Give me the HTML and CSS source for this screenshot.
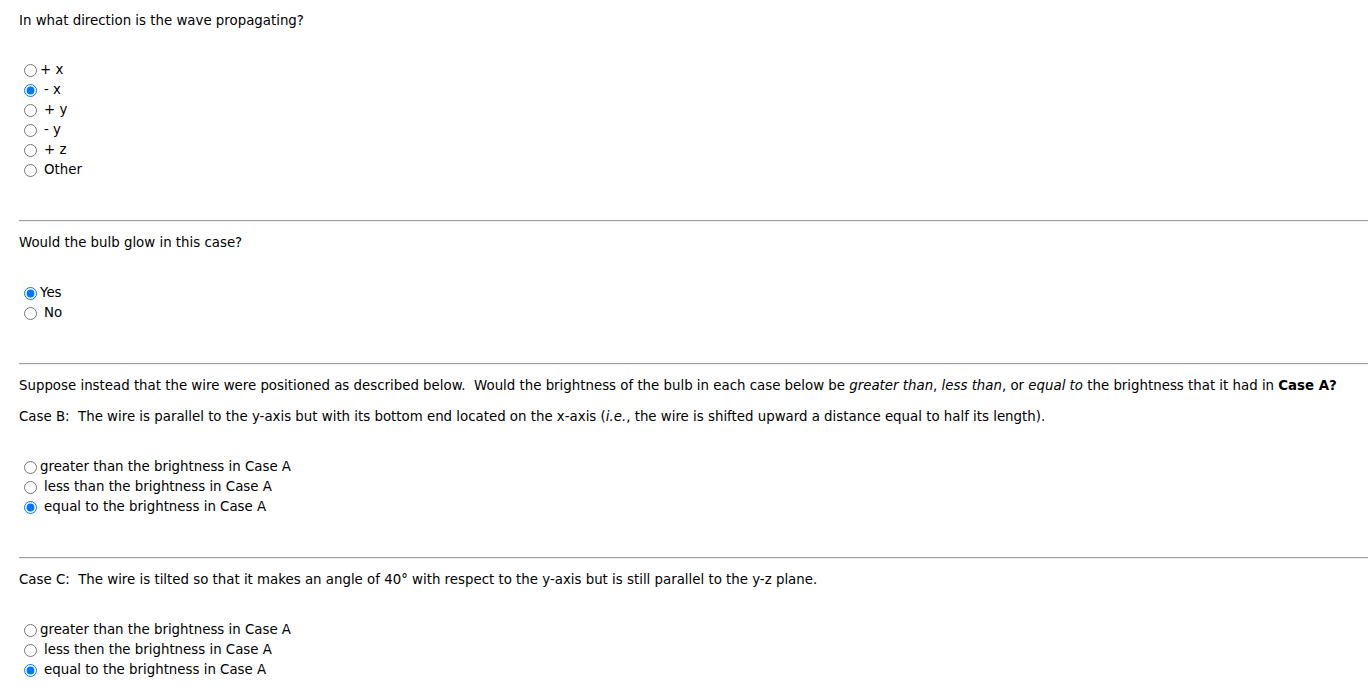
FILE: index.html
```html
<!DOCTYPE html>
<html>
<head>
<meta charset="utf-8">
<link rel="stylesheet" href="styles.css">
</head>
<body>
<div class="page">
  <section class="block first">
    <p class="q">In what direction is the wave propagating?</p>
    <div class="opts">
      <label class="opt"><input type="radio" name="a1"><span>+ x</span></label>
      <label class="opt"><input type="radio" name="a1" checked><span class="sp">- x</span></label>
      <label class="opt"><input type="radio" name="a1"><span class="sp">+ y</span></label>
      <label class="opt"><input type="radio" name="a1"><span class="sp">- y</span></label>
      <label class="opt"><input type="radio" name="a1"><span class="sp">+ z</span></label>
      <label class="opt"><input type="radio" name="a1"><span class="sp">Other</span></label>
    </div>
  </section>
  <div class="rule"></div>
  <section class="block">
    <p class="q">Would the bulb glow in this case?</p>
    <div class="opts">
      <label class="opt"><input type="radio" name="a2" checked><span>Yes</span></label>
      <label class="opt"><input type="radio" name="a2"><span class="sp">No</span></label>
    </div>
  </section>
  <div class="rule"></div>
  <section class="block">
    <p class="q">Suppose instead that the wire were positioned as described below.&nbsp; Would the brightness of the bulb in each case below be <em>greater than</em>, <em>less than</em>, or <em>equal to</em> the brightness that it had in <strong>Case A?</strong></p>
    <p class="q sub">Case B:&nbsp; The wire is parallel to the y-axis but with its bottom end located on the x-axis (<em>i.e.</em>, the wire is shifted upward a distance equal to half its length).</p>
    <div class="opts">
      <label class="opt"><input type="radio" name="a3"><span>greater than the brightness in Case A</span></label>
      <label class="opt"><input type="radio" name="a3"><span class="sp">less than the brightness in Case A</span></label>
      <label class="opt"><input type="radio" name="a3" checked><span class="sp">equal to the brightness in Case A</span></label>
    </div>
  </section>
  <div class="rule"></div>
  <section class="block">
    <p class="q">Case C:&nbsp; The wire is tilted so that it makes an angle of 40° with respect to the y-axis but is still parallel to the y-z plane.</p>
    <div class="opts">
      <label class="opt"><input type="radio" name="a4"><span>greater than the brightness in Case A</span></label>
      <label class="opt"><input type="radio" name="a4"><span class="sp">less then the brightness in Case A</span></label>
      <label class="opt"><input type="radio" name="a4" checked><span class="sp">equal to the brightness in Case A</span></label>
    </div>
  </section>
</div>
</body>
</html>
```

FILE: styles.css
```css
html, body {
  margin: 0;
  padding: 0;
  background: #fff;
}
body {
  font-family: "DejaVu Sans", Verdana, sans-serif;
  font-size: 13.35px;
  color: #000;
  overflow: hidden;
}
.page {
  padding-left: 19px;
}
.block {
  padding-top: 13px;
}
.q {
  margin: 0;
  line-height: 16px;
}
.q.sub {
  margin-top: 15px;
}
.opts {
  margin-top: 32px;
  display: flex;
  flex-direction: column;
}
.first .opts {
  margin-top: 31px;
}
.opt {
  display: flex;
  align-items: center;
  height: 20px;
  line-height: 20px;
}
.opt input {
  margin: 0 3px 0 5px;
  width: 13px;
  height: 13px;
}
.opt .sp {
  padding-left: 4px;
}
.rule {
  margin-top: 40px;
  border-top: 1px solid #a0a0a0;
  border-bottom: 1px solid #eeeeee;
}
```
